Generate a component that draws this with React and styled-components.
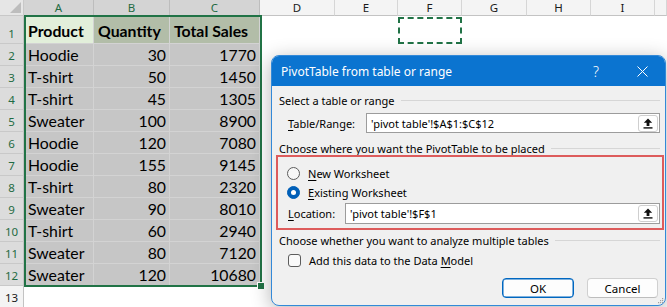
import styled, { createGlobalStyle } from 'styled-components';

const GlobalStyle = createGlobalStyle`
  html, body {
    margin: 0;
    padding: 0;
    background: #ffffff;
    overflow: hidden;
  }
  body {
    font-family: "Noto Sans", "Open Sans", sans-serif;
  }
`;

const columns = ['A', 'B', 'C', 'D', 'E', 'F', 'G', 'H', 'I', ''];

const salesData = [
  ['Hoodie', 30, 1770],
  ['T-shirt', 50, 1450],
  ['T-shirt', 45, 1305],
  ['Sweater', 100, 8900],
  ['Hoodie', 120, 7080],
  ['Hoodie', 155, 9145],
  ['T-shirt', 80, 2320],
  ['Sweater', 90, 8010],
  ['T-shirt', 60, 2940],
  ['Sweater', 80, 7120],
  ['Sweater', 120, 10680],
];

const cellFills = {
  active: '#e2efda',
  head: '#b2bda8',
  data: '#c6c6c6',
  blank: '#ffffff',
};

const Screen = styled.div`
  position: relative;
  width: 667px;
  height: 307px;
  overflow: hidden;
  background: #ffffff;
`;

const Sheet = styled.div`
  position: relative;
  display: grid;
  grid-template-columns: 24px 70px 76px 90px 75px 63px 64px 65px 64px 64px 1fr;
  grid-template-rows: 16px 28px repeat(12, 22px) 22px;
`;

const Corner = styled.div`
  position: relative;
  background: #e6e6e6;
  border-right: 1px solid #c8c8c8;
  border-bottom: 1px solid #c8c8c8;
  box-sizing: border-box;

  &::after {
    content: '';
    position: absolute;
    right: 2px;
    bottom: 2px;
    border-style: solid;
    border-width: 0 0 11px 11px;
    border-color: transparent transparent #bdbdbd transparent;
  }
`;

const ColHeader = styled.div`
  display: flex;
  align-items: center;
  justify-content: center;
  box-sizing: border-box;
  background: ${(p) => (p.$selected ? '#d4d4d4' : '#f4f4f4')};
  border-right: 1px solid ${(p) => (p.$selected ? '#bdbdbd' : '#d6d6d6')};
  border-bottom: 1px solid #c3c3c3;
  color: ${(p) => (p.$selected ? '#1f6b43' : '#1a1a1a')};
  font-size: 11.5px;
  line-height: 14px;
`;

const RowHeader = styled.div`
  display: flex;
  align-items: flex-end;
  justify-content: center;
  padding-bottom: 2px;
  box-sizing: border-box;
  background: ${(p) => (p.$selected ? '#dcdcdc' : '#f4f4f4')};
  border-right: 1px solid #c3c3c3;
  border-bottom: 1px solid ${(p) => (p.$selected ? '#c9c9c9' : '#e0e0e0')};
  color: ${(p) => (p.$selected ? '#1f6b43' : '#1a1a1a')};
  font-size: 11.5px;
  line-height: 15px;
`;

const Cell = styled.div`
  display: flex;
  align-items: ${(p) => (p.$kind === 'data' ? 'flex-end' : 'center')};
  justify-content: ${(p) => (p.$numeric ? 'flex-end' : 'flex-start')};
  padding: ${(p) => (p.$kind === 'data' ? '0 3px 1px 4px' : '2px 3px 0 4px')};
  box-sizing: border-box;
  overflow: hidden;
  white-space: nowrap;
  background: ${(p) => cellFills[p.$kind]};
  border-right: 1px solid ${(p) => (p.$kind === 'blank' ? 'transparent' : '#d3d3d3')};
  border-bottom: 1px solid ${(p) => (p.$kind === 'blank' ? 'transparent' : '#d3d3d3')};
  font-family: Lato, "Liberation Sans", sans-serif;
  font-size: 15.8px;
  line-height: 18px;
  font-weight: ${(p) => (p.$kind === 'data' || p.$kind === 'blank' ? 400 : 700)};
  color: #000000;
  ${(p) => p.$marquee && 'border: 2px dashed #217346; margin: 1px 0 0 0;'}
`;

const Selection = styled.div`
  position: absolute;
  left: 24px;
  top: 15px;
  width: 238px;
  height: 272px;
  box-sizing: border-box;
  border: 2px solid #217346;
  pointer-events: none;

  &::after {
    content: '';
    position: absolute;
    right: -5px;
    bottom: -5px;
    width: 6px;
    height: 6px;
    background: #217346;
    border: 1px solid #ffffff;
  }
`;

const Dialog = styled.div`
  position: absolute;
  left: 271px;
  top: 55px;
  width: 395px;
  height: 251px;
  box-sizing: border-box;
  display: flex;
  flex-direction: column;
  background: #f0f0f0;
  border: 1px solid #3389d8;
  border-radius: 8px;
  overflow: hidden;
  box-shadow: 0 4px 20px rgba(0, 0, 0, 0.3);
  font-size: 11px;
  color: #000000;
`;

const TitleBar = styled.div`
  display: flex;
  align-items: center;
  height: 30px;
  flex-shrink: 0;
  background: #0b74d0;
  color: #ffffff;
`;

const TitleText = styled.div`
  flex: 1;
  padding-left: 9px;
  font-size: 12px;
`;

const TitleButton = styled.div`
  display: flex;
  align-items: center;
  justify-content: center;
  width: 46px;
  height: 30px;
  font-size: 14px;
  font-weight: 300;
`;

const Body = styled.div`
  position: relative;
  flex: 1;
  display: flex;
  flex-direction: column;
  padding: 0 5px 0 7px;
`;

const SectionLabel = styled.div`
  display: flex;
  align-items: center;
  gap: 6px;
  height: ${(p) => p.$height || 16}px;
  margin-top: ${(p) => p.$top}px;
  white-space: nowrap;

  &::after {
    content: '';
    flex: 1;
    height: 1px;
    background: #d6d6d6;
  }
`;

const FieldRow = styled.div`
  display: flex;
  align-items: center;
  margin-top: ${(p) => p.$top || 0}px;
  padding-left: ${(p) => p.$indent}px;
`;

const FieldLabel = styled.span`
  width: ${(p) => p.$width}px;
  flex-shrink: 0;
`;

const Key = styled.span`
  text-decoration: underline;
  text-underline-offset: 2px;
`;

const RefInput = styled.div`
  flex: 1;
  display: flex;
  align-items: center;
  height: ${(p) => p.$height}px;
  box-sizing: border-box;
  padding: 0 1px 0 4px;
  background: #ffffff;
  border: 1px solid #9c9c9c;
`;

const RefValue = styled.span`
  flex: 1;
`;

const RefButton = styled.div`
  display: flex;
  align-items: center;
  justify-content: center;
  width: 20px;
  height: 17px;
  box-sizing: border-box;
  background: #ffffff;
  border: 1px solid #cfcfcf;
  border-radius: 3px;
`;

const Highlight = styled.div`
  display: flex;
  flex-direction: column;
  gap: 3px;
  margin: 0 -4px 0 -3px;
  padding: 8px 2px 4px 0;
  border: 2px solid #dd5c5c;
`;

const OptionRow = styled.div`
  display: flex;
  align-items: center;
  gap: 8px;
  height: 16px;
  padding-left: ${(p) => p.$indent}px;
  margin-top: ${(p) => p.$top || 0}px;
`;

const Radio = styled.span`
  position: relative;
  width: 13px;
  height: 13px;
  box-sizing: border-box;
  border-radius: 50%;
  background: ${(p) => (p.$checked ? '#005fb8' : '#f7f7f7')};
  border: 1px solid ${(p) => (p.$checked ? '#005fb8' : '#5c5c5c')};

  &::after {
    content: '';
    display: ${(p) => (p.$checked ? 'block' : 'none')};
    position: absolute;
    left: 3px;
    top: 3px;
    width: 5px;
    height: 5px;
    border-radius: 50%;
    background: #ffffff;
  }
`;

const Checkbox = styled.span`
  width: 13px;
  height: 13px;
  box-sizing: border-box;
  border: 1px solid #5c5c5c;
  border-radius: 3px;
  background: #f9f9f9;
`;

const ButtonRow = styled.div`
  display: flex;
  justify-content: flex-end;
  gap: 13px;
  margin-top: 10px;
  padding-right: 2px;
`;

const DialogButton = styled.div`
  display: flex;
  align-items: center;
  justify-content: center;
  width: ${(p) => p.$width}px;
  height: 20px;
  box-sizing: border-box;
  background: #fdfdfd;
  border: 1px solid ${(p) => (p.$primary ? '#0067c0' : '#d0d0d0')};
  border-bottom-color: ${(p) => (p.$primary ? '#0067c0' : '#bdbdbd')};
  box-shadow: ${(p) => (p.$primary ? 'inset 0 0 0 0.5px #0067c0' : 'none')};
  border-radius: 4px;
  font-size: 11.5px;
`;

const Grip = styled.svg`
  position: absolute;
  right: 1px;
  bottom: 1px;
`;

const UploadIcon = () => (
  <svg width="10" height="11" viewBox="0 0 10 11">
    <path d="M5 0.5 L9.2 4.8 H6.4 V8 H3.6 V4.8 H0.8 Z" fill="#111" />
    <rect x="0.5" y="9.2" width="9" height="1.4" fill="#111" />
  </svg>
);

const CloseIcon = () => (
  <svg width="11" height="11" viewBox="0 0 11 11">
    <path d="M0.5 0.5 L10.5 10.5 M10.5 0.5 L0.5 10.5" stroke="#ffffff" strokeWidth="1" />
  </svg>
);

const App = () => {
  const renderRow = (rowIndex) => {
    const rowNumber = rowIndex + 1;
    const selected = rowNumber <= 12;
    let values = [];
    if (rowNumber === 1) values = ['Product', 'Quantity', 'Total Sales'];
    else if (selected) values = salesData[rowIndex - 1];

    return [
      <RowHeader key={`r${rowNumber}`} $selected={selected}>
        {rowNumber}
      </RowHeader>,
      ...columns.map((col, colIndex) => {
        const key = `${col || 'J'}${rowNumber}`;
        if (colIndex < 3 && selected) {
          const kind = rowNumber === 1 ? (colIndex === 0 ? 'active' : 'head') : 'data';
          return (
            <Cell key={key} $kind={kind} $numeric={rowNumber > 1 && colIndex > 0}>
              {values[colIndex]}
            </Cell>
          );
        }
        return <Cell key={key} $kind="blank" $marquee={rowNumber === 1 && col === 'F'} />;
      }),
    ];
  };

  return (
    <Screen>
      <GlobalStyle />
      <Sheet>
        <Corner />
        {columns.map((col, i) => (
          <ColHeader key={`h${i}`} $selected={i < 3}>
            {col}
          </ColHeader>
        ))}
        {Array.from({ length: 13 }, (_, i) => renderRow(i))}
        <Selection />
      </Sheet>

      <Dialog>
        <TitleBar>
          <TitleText>PivotTable from table or range</TitleText>
          <TitleButton>?</TitleButton>
          <TitleButton>
            <CloseIcon />
          </TitleButton>
        </TitleBar>
        <Body>
          <SectionLabel $top={6}>Select a table or range</SectionLabel>
          <FieldRow $top={5} $indent={9}>
            <FieldLabel $width={78}>
              <Key>T</Key>able/Range:
            </FieldLabel>
            <RefInput $height={20}>
              <RefValue>'pivot table'!$A$1:$C$12</RefValue>
              <RefButton>
                <UploadIcon />
              </RefButton>
            </RefInput>
          </FieldRow>

          <SectionLabel $top={8} $height={14}>
            Choose where you want the PivotTable to be placed
          </SectionLabel>
          <Highlight>
            <OptionRow $indent={9}>
              <Radio />
              <span>
                <Key>N</Key>ew Worksheet
              </span>
            </OptionRow>
            <OptionRow $indent={9}>
              <Radio $checked />
              <span>
                <Key>E</Key>xisting Worksheet
              </span>
            </OptionRow>
            <FieldRow $indent={10}>
              <FieldLabel $width={57}>
                <Key>L</Key>ocation:
              </FieldLabel>
              <RefInput $height={21}>
                <RefValue>'pivot table'!$F$1</RefValue>
                <RefButton>
                  <UploadIcon />
                </RefButton>
              </RefInput>
            </FieldRow>
          </Highlight>

          <SectionLabel $top={2}>Choose whether you want to analyze multiple tables</SectionLabel>
          <OptionRow $indent={9} $top={4}>
            <Checkbox />
            <span>
              Add this data to the Data <Key>M</Key>odel
            </span>
          </OptionRow>

          <ButtonRow>
            <DialogButton $primary $width={72}>
              OK
            </DialogButton>
            <DialogButton $width={71}>Cancel</DialogButton>
          </ButtonRow>
          <Grip width="6" height="6" viewBox="0 0 6 6">
            <rect x="4" y="0" width="1.2" height="1.2" fill="#a0a0a0" />
            <rect x="2" y="2" width="1.2" height="1.2" fill="#a0a0a0" />
            <rect x="4" y="2" width="1.2" height="1.2" fill="#a0a0a0" />
            <rect x="0" y="4" width="1.2" height="1.2" fill="#a0a0a0" />
            <rect x="2" y="4" width="1.2" height="1.2" fill="#a0a0a0" />
            <rect x="4" y="4" width="1.2" height="1.2" fill="#a0a0a0" />
          </Grip>
        </Body>
      </Dialog>
    </Screen>
  );
};

export default App;
